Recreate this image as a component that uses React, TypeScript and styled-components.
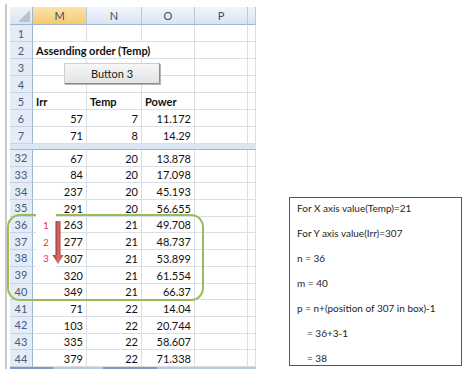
import React from 'react'
import styled, { createGlobalStyle } from 'styled-components'

const GlobalStyle = createGlobalStyle`
  html, body {
    margin: 0;
    padding: 0;
    background: #ffffff;
  }
  body {
    font-family: Lato, "Open Sans", "Liberation Sans", sans-serif;
  }
`

const COLS = '23px 54px 55px 53px 53px 8px'

const Page = styled.div`
  display: flex;
  align-items: flex-start;
  width: 474px;
  height: 389px;
  overflow: hidden;
`

const SheetWrap = styled.div`
  position: relative;
  margin: 4px 0 0 5px;
  padding: 3px 0 0 3px;
  border-left: 2px solid #c9c9c9;
`

const Row = styled.div<{ $h: number }>`
  display: grid;
  grid-template-columns: ${COLS};
  height: ${(p) => p.$h}px;
`

const HeadCell = styled.div<{ $active?: boolean }>`
  display: flex;
  align-items: center;
  justify-content: center;
  font-size: 11px;
  color: #3b4d6c;
  border-right: 1px solid #b8c9dd;
  border-bottom: 1px solid #9eb6ce;
  background: ${(p) =>
    p.$active
      ? 'linear-gradient(#fbe3ab, #f7c96f)'
      : 'linear-gradient(#f2f6fb, #d9e4f1)'};
`

const Corner = styled.div`
  position: relative;
  border-right: 1px solid #9eb6ce;
  border-bottom: 1px solid #9eb6ce;
  background: linear-gradient(#eef3f9, #d9e4f1);

  &::after {
    content: '';
    position: absolute;
    right: 2px;
    bottom: 2px;
    border-left: 12px solid transparent;
    border-bottom: 12px solid #b3c3d8;
  }
`

const RowNum = styled.div`
  display: flex;
  align-items: center;
  justify-content: center;
  font-size: 11px;
  color: #4a5b79;
  background: #e4ecf7;
  border-right: 1px solid #9eb6ce;
  border-bottom: 1px solid #c5d3e4;
`

const Cell = styled.div<{ $align?: 'left' | 'right'; $bold?: boolean; $span?: number }>`
  display: flex;
  align-items: flex-end;
  justify-content: ${(p) => (p.$align === 'right' ? 'flex-end' : 'flex-start')};
  padding: 0 3px 1px 3px;
  font-size: 11px;
  font-weight: ${(p) => (p.$bold ? 700 : 400)};
  color: #111;
  white-space: nowrap;
  border-right: 1px solid #dadfe6;
  border-bottom: 1px solid #dadfe6;
  grid-column: span ${(p) => p.$span ?? 1};
  min-width: 0;
`

const Split = styled.div`
  height: 5px;
  background: #dce6f2;
  border-bottom: 1px solid #9eb6ce;
  width: 246px;
`

const Bottom = styled.div`
  width: 246px;
  height: 2px;
  background: linear-gradient(
    to right,
    #7d9cc4 0 43px,
    #b9cbe2 43px 93px,
    #7d9cc4 93px 147px,
    #b9cbe2 147px
  );
`

const SheetButton = styled.div`
  position: absolute;
  left: 57px;
  top: 59px;
  width: 94px;
  height: 19px;
  display: flex;
  align-items: center;
  justify-content: center;
  font-size: 11px;
  color: #222;
  background: linear-gradient(#f7f7f7, #e3e3e3);
  border: 1px solid #cfcfcf;
  border-right-color: #8d8d8d;
  border-bottom-color: #8d8d8d;
  box-shadow: 1px 1px 0 #b5b5b5;
`

const GreenBox = styled.div`
  position: absolute;
  left: 0px;
  top: 210px;
  width: 193px;
  height: 83px;
  border: 2.5px solid #9bbb59;
  border-radius: 13px;
  pointer-events: none;
`

const LabelBox = styled.div`
  position: absolute;
  left: 29px;
  top: 207px;
  width: 20px;
  height: 57px;
  background: #ffffff;
  display: flex;
  flex-direction: column;
  align-items: center;
  padding-top: 6px;
  box-sizing: border-box;
`

const StepNum = styled.div`
  height: 16.7px;
  line-height: 16.7px;
  font-size: 10px;
  color: #e03a3a;
`

const Arrow = styled.svg`
  position: absolute;
  left: 44px;
  top: 217px;
`

const Note = styled.div`
  margin: 197px 0 0 33px;
  width: 164px;
  height: 166px;
  border: 1.5px solid #555;
  padding: 1px 0 0 7px;
  box-sizing: content-box;
`

const NoteLine = styled.div<{ $indent?: boolean }>`
  font-size: 10px;
  line-height: 18px;
  margin-bottom: 7px;
  color: #1e1e1e;
  padding-left: ${(p) => (p.$indent ? 10 : 0)}px;
  white-space: nowrap;
`

type Data = [number, string, string, string]

const bottomRows: Data[] = [
  [32, '67', '20', '13.878'],
  [33, '84', '20', '17.098'],
  [34, '237', '20', '45.193'],
  [35, '291', '20', '56.655'],
  [36, '263', '21', '49.708'],
  [37, '277', '21', '48.737'],
  [38, '307', '21', '53.899'],
  [39, '320', '21', '61.554'],
  [40, '349', '21', '66.37'],
  [41, '71', '22', '14.04'],
  [42, '103', '22', '20.744'],
  [43, '335', '22', '58.607'],
  [44, '379', '22', '71.338'],
]

const DataRow = ({ row, h }: { row: Data; h: number }) => (
  <Row $h={h}>
    <RowNum>{row[0]}</RowNum>
    <Cell $align="right">{row[1]}</Cell>
    <Cell $align="right">{row[2]}</Cell>
    <Cell $align="right">{row[3]}</Cell>
    <Cell />
    <Cell />
  </Row>
)

const EmptyRow = ({ n }: { n: number }) => (
  <Row $h={17}>
    <RowNum>{n}</RowNum>
    <Cell />
    <Cell />
    <Cell />
    <Cell />
    <Cell />
  </Row>
)

const App = (): JSX.Element => (
  <>
    <GlobalStyle />
    <Page>
      <SheetWrap>
        <Row $h={18}>
          <Corner />
          <HeadCell $active>M</HeadCell>
          <HeadCell>N</HeadCell>
          <HeadCell>O</HeadCell>
          <HeadCell>P</HeadCell>
          <HeadCell />
        </Row>
        <EmptyRow n={1} />
        <Row $h={17}>
          <RowNum>2</RowNum>
          <Cell $bold $span={3}>Assending order (Temp)</Cell>
          <Cell />
          <Cell />
        </Row>
        <EmptyRow n={3} />
        <EmptyRow n={4} />
        <Row $h={17}>
          <RowNum>5</RowNum>
          <Cell $bold>Irr</Cell>
          <Cell $bold>Temp</Cell>
          <Cell $bold>Power</Cell>
          <Cell />
          <Cell />
        </Row>
        <DataRow row={[6, '57', '7', '11.172']} h={17} />
        <DataRow row={[7, '71', '8', '14.29']} h={17} />
        <Split />
        {bottomRows.map((r) => (
          <DataRow key={r[0]} row={r} h={16.7} />
        ))}
        <Bottom />

        <SheetButton>Button 3</SheetButton>
        <GreenBox />
        <LabelBox>
          <StepNum>1</StepNum>
          <StepNum>2</StepNum>
          <StepNum>3</StepNum>
        </LabelBox>
        <Arrow width="14" height="44" viewBox="0 0 14 44">
          <defs>
            <linearGradient id="shaft" x1="0" y1="0" x2="1" y2="0">
              <stop offset="0" stopColor="#9c2f2c" />
              <stop offset="0.5" stopColor="#d9706c" />
              <stop offset="1" stopColor="#b8413d" />
            </linearGradient>
          </defs>
          <rect x="4.5" y="0" width="5" height="34" fill="url(#shaft)" />
          <polygon points="1.5,34 12.5,34 7,43" fill="url(#shaft)" />
        </Arrow>
      </SheetWrap>
      <Note>
        <NoteLine>For X axis value(Temp)=21</NoteLine>
        <NoteLine>For Y axis value(Irr)=307</NoteLine>
        <NoteLine>n = 36</NoteLine>
        <NoteLine>m = 40</NoteLine>
        <NoteLine>p = n+(position of 307 in box)-1</NoteLine>
        <NoteLine $indent>= 36+3-1</NoteLine>
        <NoteLine $indent>= 38</NoteLine>
      </Note>
    </Page>
  </>
)

export default App
